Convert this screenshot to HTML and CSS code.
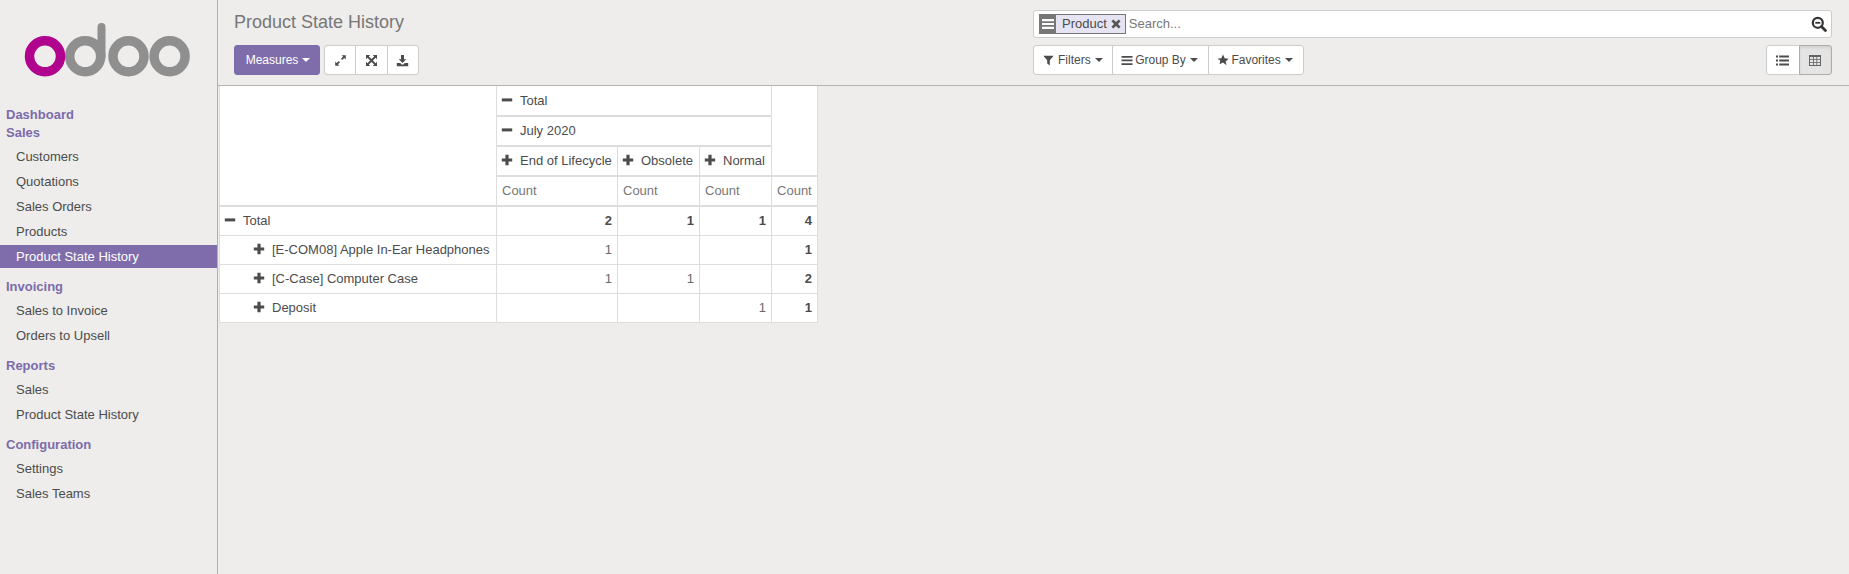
FILE: index.html
```html
<!DOCTYPE html>
<html lang="en">
<head>
<meta charset="utf-8">
<title>Product State History</title>
<link rel="stylesheet" href="styles.css">
</head>
<body>
<svg class="defs" width="0" height="0" aria-hidden="true">
  <symbol id="i-plus" viewBox="0 0 12 12"><path d="M4.4 0.8h3.2v3.6h3.6v3.2H7.6v3.6H4.4V7.6H0.8V4.4h3.6z"/></symbol>
  <symbol id="i-minus" viewBox="0 0 12 12"><rect x="0.8" y="4.4" width="10.4" height="3"/></symbol>
</svg>
<div class="app">
  <aside class="sidebar">
    <a class="logo" href="#" aria-label="odoo">
      <svg width="175" height="60" viewBox="0 0 175 60">
        <g fill="none" stroke="#8f8f8f" stroke-width="9.5">
          <circle cx="66.2" cy="36.3" r="15.5"/>
          <path d="M82.5 36V7" stroke-width="8" stroke-linecap="round"/>
          <circle cx="109.5" cy="36.3" r="15.5"/>
          <circle cx="150.6" cy="36.3" r="15.5"/>
        </g>
        <circle cx="26" cy="36.3" r="15.5" fill="none" stroke="#b0048f" stroke-width="9.5"/>
      </svg>
    </a>
    <nav class="menu">
      <a class="menu-head first" href="#">Dashboard</a>
      <a class="menu-head tight" href="#">Sales</a>
      <a class="menu-item" href="#">Customers</a>
      <a class="menu-item" href="#">Quotations</a>
      <a class="menu-item" href="#">Sales Orders</a>
      <a class="menu-item" href="#">Products</a>
      <a class="menu-item active" href="#">Product State History</a>
      <a class="menu-head" href="#">Invoicing</a>
      <a class="menu-item" href="#">Sales to Invoice</a>
      <a class="menu-item" href="#">Orders to Upsell</a>
      <a class="menu-head" href="#">Reports</a>
      <a class="menu-item" href="#">Sales</a>
      <a class="menu-item" href="#">Product State History</a>
      <a class="menu-head" href="#">Configuration</a>
      <a class="menu-item" href="#">Settings</a>
      <a class="menu-item" href="#">Sales Teams</a>
    </nav>
  </aside>
  <main class="main">
    <header class="panel">
      <div class="panel-col left">
        <h1 class="title">Product State History</h1>
        <div class="tools">
          <button class="btn primary">Measures <span class="caret"></span></button>
          <div class="group">
            <button class="btn icon-btn" aria-label="Flip axis"><svg width="13" height="13" viewBox="0 0 13 13"><path class="ico" d="M7.6 1.2h4.2v4.2l-1.5-1.5-2.1 2.1-1.2-1.2 2.1-2.1zM5.4 11.8H1.2V7.6l1.5 1.5 2.1-2.1 1.2 1.2-2.1 2.1z"/></svg></button>
            <button class="btn icon-btn" aria-label="Expand all"><svg width="13" height="13" viewBox="0 0 13 13"><path class="ico" d="M1 1h4.2L3.8 2.4l2.7 2.7 2.7-2.7L7.8 1H12v4.2l-1.4-1.4-2.7 2.7 2.7 2.7L12 7.8V12H7.8l1.4-1.4-2.7-2.7-2.7 2.7L5.2 12H1V7.8l1.4 1.4 2.7-2.7-2.7-2.7L1 5.2z"/></svg></button>
            <button class="btn icon-btn" aria-label="Download"><svg width="13" height="13" viewBox="0 0 13 13"><path class="ico" d="M5 1h3v4.2h2.3L6.5 9 2.7 5.2H5zM.8 9h3.4l1.5 1.4h1.6L8.8 9h3.4v3.2H.8z"/></svg></button>
          </div>
        </div>
      </div>
      <div class="panel-col right">
        <div class="search">
          <div class="facet">
            <span class="facet-icon"><svg width="12" height="10" viewBox="0 0 12 10"><path fill="#fff" d="M0 0h12v2.2H0zM0 3.9h12v2.2H0zM0 7.8h12V10H0z"/></svg></span>
            <span class="facet-value">Product</span>
            <svg class="facet-x" width="10" height="10" viewBox="0 0 10 10"><path fill="#555" d="M2.3.4 5 3.1 7.7.4l1.9 1.9L6.9 5l2.7 2.7-1.9 1.9L5 6.9 2.3 9.6.4 7.7 3.1 5 .4 2.3z"/></svg>
          </div>
          <span class="placeholder">Search...</span>
          <svg class="search-ico" width="16" height="16" viewBox="0 0 16 16"><circle cx="6.8" cy="6.8" r="5" fill="none" stroke="#333" stroke-width="2.2"/><path d="M4.3 5.9h5v1.8h-5z" fill="#333"/><path d="m10.4 10.4 4 4" stroke="#333" stroke-width="2.8" stroke-linecap="round"/></svg>
        </div>
        <div class="tools spread">
          <div class="group">
            <button class="btn labelled filter"><svg width="11" height="11" viewBox="0 0 11 11"><path class="ico" d="M.3.8h10.4L6.8 5.2V10.6L4.2 8.6V5.2z"/></svg> Filters <span class="caret"></span></button>
            <button class="btn labelled"><svg width="12" height="11" viewBox="0 0 12 11"><path class="ico" d="M.5 1h11v1.7H.5zM.5 4.6h11v1.7H.5zM.5 8.2h11v1.7H.5z"/></svg> Group By <span class="caret"></span></button>
            <button class="btn labelled"><svg width="12" height="12" viewBox="0 0 12 12"><path class="ico" d="m6 .6 1.7 3.6 3.9.5-2.9 2.7.8 3.9L6 8.4l-3.5 1.9.8-3.9L.4 4.7l3.9-.5z"/></svg> Favorites <span class="caret"></span></button>
          </div>
          <div class="group">
            <button class="btn view" aria-label="List"><svg width="13" height="11" viewBox="0 0 13 11"><path class="ico" d="M0 .5h2v2H0zM3.2.5H13v2H3.2zM0 4.5h2v2H0zM3.2 4.5H13v2H3.2zM0 8.5h2v2H0zM3.2 8.5H13v2H3.2z"/></svg></button>
            <button class="btn view on" aria-label="Pivot"><svg width="12" height="11" viewBox="0 0 12 11"><path class="ico" opacity=".85" d="M0 0h12v2H0zM0 2h1v9H0zM11 2h1v9h-1zM1 10h10v1H1zM1 4h10v.8H1zM1 7h10v.8H1zM4 2h.8v8H4zM7.4 2h.8v8h-.8z"/></svg></button>
          </div>
        </div>
      </div>
    </header>
    <section class="content">
      <table class="pivot">
        <colgroup><col class="c0"><col class="c1"><col class="c2"><col class="c3"><col class="c4"></colgroup>
        <thead>
          <tr>
            <th class="blank" rowspan="4"></th>
            <th class="hd top" colspan="3"><svg class="tg"><use href="#i-minus"/></svg>Total</th>
            <th class="blank" rowspan="3"></th>
          </tr>
          <tr><th class="hd" colspan="3"><svg class="tg"><use href="#i-minus"/></svg>July 2020</th></tr>
          <tr>
            <th class="hd"><svg class="tg"><use href="#i-plus"/></svg>End of Lifecycle</th>
            <th class="hd"><svg class="tg"><use href="#i-plus"/></svg>Obsolete</th>
            <th class="hd"><svg class="tg"><use href="#i-plus"/></svg>Normal</th>
          </tr>
          <tr>
            <th class="measure">Count</th><th class="measure">Count</th><th class="measure">Count</th><th class="measure">Count</th>
          </tr>
        </thead>
        <tbody>
          <tr class="total"><td class="row"><svg class="tg"><use href="#i-minus"/></svg>Total</td><td>2</td><td>1</td><td>1</td><td>4</td></tr>
          <tr><td class="row sub"><svg class="tg"><use href="#i-plus"/></svg>[E-COM08] Apple In-Ear Headphones</td><td>1</td><td></td><td></td><td class="b">1</td></tr>
          <tr><td class="row sub"><svg class="tg"><use href="#i-plus"/></svg>[C-Case] Computer Case</td><td>1</td><td>1</td><td></td><td class="b">2</td></tr>
          <tr><td class="row sub"><svg class="tg"><use href="#i-plus"/></svg>Deposit</td><td></td><td></td><td>1</td><td class="b">1</td></tr>
        </tbody>
      </table>
    </section>
  </main>
</div>
</body>
</html>
```
FILE: styles.css
```css
* { box-sizing: border-box; }
html, body { margin: 0; height: 100%; }
body {
  background: #eeedeb;
  color: #4c4c4c;
  font: 13px/18.57px "Liberation Sans", Arial, sans-serif;
  overflow: hidden;
}
a { text-decoration: none; color: inherit; }
.defs { position: absolute; }
.app { display: flex; height: 574px; }

.sidebar { width: 218px; flex: none; border-right: 1px solid #b0aeb8; }
.logo { display: block; height: 104px; padding: 20px 0 0 19px; }
.logo svg { display: block; }
.menu { display: flex; flex-direction: column; }
.menu-head {
  display: block; height: 18px; line-height: 18px;
  margin: 9px 0 2px; padding-left: 6px;
  color: #7c6bab; font-weight: 700;
}
.menu-head.first { margin: 2px 0 0; }
.menu-head.tight { margin: 0 0 2px; }
.menu-item {
  display: block; height: 23px; line-height: 23px;
  margin: 1px 0; padding-left: 16px;
  color: #4c4c4c;
}
.menu-item.active { background: #7f6dab; color: #fff; }

.main { flex: 1; min-width: 0; display: flex; flex-direction: column; }
.panel {
  height: 86px; flex: none;
  display: flex; justify-content: space-between;
  padding: 10px 17px 0 16px;
  border-bottom: 1px solid #b3b3b3;
}
.panel-col.left { width: 400px; }
.panel-col.right { width: 799px; }
.title { margin: 1px 0 0; height: 34px; font-size: 18px; line-height: 22px; font-weight: 400; color: #777; }
.tools { display: flex; gap: 4px; height: 30px; }
.tools.spread { justify-content: space-between; margin-top: 7px; }

.btn {
  height: 30px; padding: 0 10px;
  display: inline-flex; align-items: center; gap: 4px;
  font: 12px/18px "Liberation Sans", Arial, sans-serif;
  color: #4c4c4c; background: #fff;
  border: 1px solid #ccc; border-radius: 3px;
}
.btn.labelled { padding: 0 10px 0 8.5px; }
.btn.labelled svg { margin-right: -2px; }
.btn.labelled.filter { padding-right: 9px; }
.btn.labelled.filter svg { margin-right: .5px; }
.btn.primary { width: 86px; padding: 0 9px 0 11px; justify-content: center; background: #7f6dab; border-color: #7f6dab; color: #fff; gap: 4px; }
.caret { width: 0; height: 0; border-top: 4px solid currentColor; border-left: 4px solid transparent; border-right: 4px solid transparent; display: inline-block; }
.ico { fill: #4c4c4c; }
.group { display: flex; }
.group .btn { border-radius: 0; margin-left: -1px; }
.group .btn:first-child { border-radius: 3px 0 0 3px; margin-left: 0; }
.group .btn:last-child { border-radius: 0 3px 3px 0; }
.icon-btn { width: 32.3px; padding: 0; justify-content: center; }
.view { width: 33.5px; padding: 0; justify-content: center; }
.view.on { background: #e4e4e4; border-color: #adadad; box-shadow: inset 0 2px 3px rgba(0,0,0,.08); }

.search {
  height: 28px; display: flex; align-items: center;
  padding: 0 4px 0 5px;
  background: #fff; border: 1px solid #ccc; border-radius: 3px;
}
.facet {
  display: flex; align-items: center; height: 20px; margin-right: 3px;
  background: #e6e4f2; border: 1px solid #777; color: #4c4c4c;
}
.facet-icon { width: 17px; height: 20px; margin: -1px 0 -1px -1px; display: flex; align-items: center; justify-content: center; background: #777; }
.facet-value { padding: 0 4px 0 6px; line-height: 17px; margin-top: -2px; }
.facet-x { margin-right: 4px; }
.placeholder { color: #777; flex: 1; }
.search-ico { flex: none; }

.content { flex: 1; padding: 0 0 0 1px; }
.pivot { border-collapse: collapse; table-layout: fixed; width: 598px; background: #fff; }
.c0 { width: 277px; } .c1 { width: 121px; } .c2 { width: 82px; } .c3 { width: 72px; } .c4 { width: 46px; }
.pivot th, .pivot td {
  height: 29px; padding: 0 5px;
  border: 1px solid #ddd;
  font-weight: 400; text-align: left; white-space: nowrap;
}
.pivot td { padding-top: 2px; }
.pivot thead th { border-width: 1px 1px 2px; height: 30px; }
.pivot thead th.hd { border-width: 0 1px 2px 1px; }
.pivot thead th.top { padding-top: 2px; }
.pivot thead tr:first-child th { border-top: 0; }
.pivot thead tr:last-child th { border-bottom-width: 2px; }
.pivot th.measure { color: #777; }
.pivot td { text-align: right; }
.pivot td.row { text-align: left; }
.pivot td.row.sub { padding-left: 34px; }
.pivot tr.total td { font-weight: 700; }
.pivot tr.total td.row { font-weight: 400; }
.pivot td.b { font-weight: 700; }
.pivot td:not(.b):not(.row) { color: #6a6a6a; }
.pivot tr.total td:not(.row) { color: #4c4c4c; }
.tg { width: 12px; height: 12px; margin: 0 7px 0 -1px; fill: #4c4c4c; vertical-align: -1px; }
```
